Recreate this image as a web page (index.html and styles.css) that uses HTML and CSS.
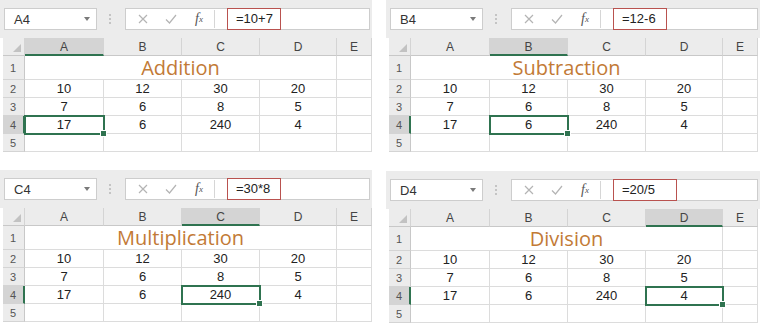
FILE: index.html
```html
<!DOCTYPE html>
<html lang="en">
<head>
    <meta charset="UTF-8">
    <meta name="viewport" content="width=device-width, initial-scale=1.0">
    <title>Excel Arithmetic Formulas</title>
    <link rel="stylesheet" href="styles.css">
</head>
<body>

    <div class="sheet">

        <!-- Addition -->
        <div class="panel">
            <div class="toolbar">
                <div class="namebox"><span>A4</span><span class="caret"></span></div>
                <div class="grip"></div>
                <div class="fbar">
                    <span class="ic"><svg width="10" height="10" viewBox="0 0 10 10"><path d="M1 1L9 9M9 1L1 9" stroke="#b4b4b4" stroke-width="1.2"/></svg></span>
                    <span class="ic"><svg width="12" height="10" viewBox="0 0 12 10"><path d="M1 5.5L4.5 9L11 1" stroke="#b4b4b4" stroke-width="1.2" fill="none"/></svg></span>
                    <span class="ic fx">f<sub>x</sub></span>
                    <span class="fsep"></span>
                    <span class="formula">=10+7</span>
                </div>
            </div>
            <div class="grid">
                <div class="corner"></div>
                <div class="ch on">A</div><div class="ch">B</div><div class="ch">C</div><div class="ch">D</div><div class="ch">E</div>
                <div class="rh">1</div><div class="title">Addition</div><div class="c"></div>
                <div class="rh">2</div><div class="c">10</div><div class="c">12</div><div class="c">30</div><div class="c">20</div><div class="c"></div>
                <div class="rh">3</div><div class="c">7</div><div class="c">6</div><div class="c">8</div><div class="c">5</div><div class="c"></div>
                <div class="rh on">4</div><div class="c sel">17</div><div class="c">6</div><div class="c">240</div><div class="c">4</div><div class="c"></div>
                <div class="rh">5</div><div class="c"></div><div class="c"></div><div class="c"></div><div class="c"></div><div class="c"></div>
            </div>
        </div>

        <!-- Subtraction -->
        <div class="panel">
            <div class="toolbar">
                <div class="namebox"><span>B4</span><span class="caret"></span></div>
                <div class="grip"></div>
                <div class="fbar">
                    <span class="ic"><svg width="10" height="10" viewBox="0 0 10 10"><path d="M1 1L9 9M9 1L1 9" stroke="#b4b4b4" stroke-width="1.2"/></svg></span>
                    <span class="ic"><svg width="12" height="10" viewBox="0 0 12 10"><path d="M1 5.5L4.5 9L11 1" stroke="#b4b4b4" stroke-width="1.2" fill="none"/></svg></span>
                    <span class="ic fx">f<sub>x</sub></span>
                    <span class="fsep"></span>
                    <span class="formula">=12-6</span>
                </div>
            </div>
            <div class="grid">
                <div class="corner"></div>
                <div class="ch">A</div><div class="ch on">B</div><div class="ch">C</div><div class="ch">D</div><div class="ch">E</div>
                <div class="rh">1</div><div class="title">Subtraction</div><div class="c"></div>
                <div class="rh">2</div><div class="c">10</div><div class="c">12</div><div class="c">30</div><div class="c">20</div><div class="c"></div>
                <div class="rh">3</div><div class="c">7</div><div class="c">6</div><div class="c">8</div><div class="c">5</div><div class="c"></div>
                <div class="rh on">4</div><div class="c">17</div><div class="c sel">6</div><div class="c">240</div><div class="c">4</div><div class="c"></div>
                <div class="rh">5</div><div class="c"></div><div class="c"></div><div class="c"></div><div class="c"></div><div class="c"></div>
            </div>
        </div>

        <!-- Multiplication -->
        <div class="panel">
            <div class="toolbar">
                <div class="namebox"><span>C4</span><span class="caret"></span></div>
                <div class="grip"></div>
                <div class="fbar">
                    <span class="ic"><svg width="10" height="10" viewBox="0 0 10 10"><path d="M1 1L9 9M9 1L1 9" stroke="#b4b4b4" stroke-width="1.2"/></svg></span>
                    <span class="ic"><svg width="12" height="10" viewBox="0 0 12 10"><path d="M1 5.5L4.5 9L11 1" stroke="#b4b4b4" stroke-width="1.2" fill="none"/></svg></span>
                    <span class="ic fx">f<sub>x</sub></span>
                    <span class="fsep"></span>
                    <span class="formula">=30*8</span>
                </div>
            </div>
            <div class="grid">
                <div class="corner"></div>
                <div class="ch">A</div><div class="ch">B</div><div class="ch on">C</div><div class="ch">D</div><div class="ch">E</div>
                <div class="rh">1</div><div class="title">Multiplication</div><div class="c"></div>
                <div class="rh">2</div><div class="c">10</div><div class="c">12</div><div class="c">30</div><div class="c">20</div><div class="c"></div>
                <div class="rh">3</div><div class="c">7</div><div class="c">6</div><div class="c">8</div><div class="c">5</div><div class="c"></div>
                <div class="rh on">4</div><div class="c">17</div><div class="c">6</div><div class="c sel">240</div><div class="c">4</div><div class="c"></div>
                <div class="rh">5</div><div class="c"></div><div class="c"></div><div class="c"></div><div class="c"></div><div class="c"></div>
            </div>
        </div>

        <!-- Division -->
        <div class="panel shifted">
            <div class="toolbar">
                <div class="namebox"><span>D4</span><span class="caret"></span></div>
                <div class="grip"></div>
                <div class="fbar">
                    <span class="ic"><svg width="10" height="10" viewBox="0 0 10 10"><path d="M1 1L9 9M9 1L1 9" stroke="#b4b4b4" stroke-width="1.2"/></svg></span>
                    <span class="ic"><svg width="12" height="10" viewBox="0 0 12 10"><path d="M1 5.5L4.5 9L11 1" stroke="#b4b4b4" stroke-width="1.2" fill="none"/></svg></span>
                    <span class="ic fx">f<sub>x</sub></span>
                    <span class="fsep"></span>
                    <span class="formula wide">=20/5</span>
                </div>
            </div>
            <div class="grid">
                <div class="corner"></div>
                <div class="ch">A</div><div class="ch">B</div><div class="ch">C</div><div class="ch on">D</div><div class="ch">E</div>
                <div class="rh">1</div><div class="title">Division</div><div class="c"></div>
                <div class="rh">2</div><div class="c">10</div><div class="c">12</div><div class="c">30</div><div class="c">20</div><div class="c"></div>
                <div class="rh">3</div><div class="c">7</div><div class="c">6</div><div class="c">8</div><div class="c">5</div><div class="c"></div>
                <div class="rh on">4</div><div class="c">17</div><div class="c">6</div><div class="c">240</div><div class="c sel">4</div><div class="c"></div>
                <div class="rh">5</div><div class="c"></div><div class="c"></div><div class="c"></div><div class="c"></div><div class="c"></div>
            </div>
        </div>

    </div>

</body>
</html>
```

FILE: styles.css
```css
body {
    margin: 0;
    background-color: #fff;
    font-family: "Liberation Sans", Arial, sans-serif;
    color: #222;
}
.sheet {
    display: grid;
    grid-template-columns: 372px 374px;
    column-gap: 14px;
    row-gap: 18px;
}
.panel {
    width: 100%;
}
.shifted {
    margin-top: 1px;
}

/* name box + formula bar */
.toolbar {
    height: 38px;
    box-sizing: border-box;
    padding: 8px 2px 0 4px;
    background-color: #ececec;
    display: flex;
    align-items: flex-start;
}
.namebox {
    width: 93px;
    height: 22px;
    box-sizing: border-box;
    border: 1px solid #cdcdcd;
    background-color: #fff;
    display: flex;
    align-items: center;
    justify-content: space-between;
    padding: 0 6px 0 9px;
    font-size: 13px;
    color: #333;
}
.caret {
    width: 0;
    height: 0;
    border-left: 3px solid transparent;
    border-right: 3px solid transparent;
    border-top: 4px solid #7a7a7a;
}
.grip {
    width: 2px;
    height: 10px;
    margin: 6px 12px 0 12px;
    border-left: 2px dotted #c4c4c4;
}
.fbar {
    flex: 1;
    height: 22px;
    box-sizing: border-box;
    border: 1px solid #cdcdcd;
    background-color: #fff;
    display: flex;
    align-items: center;
    padding-left: 3px;
}
.ic {
    width: 28px;
    display: flex;
    justify-content: center;
    align-items: center;
}
.fx {
    font-family: "Liberation Serif", "Times New Roman", serif;
    font-style: italic;
    font-size: 14px;
    color: #555;
}
.fx sub {
    font-size: 9px;
}
.fsep {
    width: 1px;
    height: 18px;
    margin-left: 1px;
    background-color: #d6d6d6;
}
.formula {
    align-self: stretch;
    margin: -1px 0 -1px 12px;
    width: 54px;
    box-sizing: border-box;
    border: 1px solid #b9524f;
    padding-left: 8px;
    font-size: 13px;
    line-height: 20px;
    color: #222;
}
.formula.wide {
    width: 64px;
}

/* worksheet grid */
.grid {
    margin-left: 3px;
    display: grid;
    grid-template-columns: 22px 79px 78px 78px 77px 35px;
    grid-template-rows: 18px 24px 18px 18px 18px 18px;
}
.corner {
    background-color: #ececec;
    border-right: 1px solid #d4d4d4;
    border-bottom: 1px solid #c8c8c8;
    position: relative;
}
.corner::after {
    content: "";
    position: absolute;
    right: 3px;
    bottom: 3px;
    border-left: 8px solid transparent;
    border-bottom: 8px solid #c2c2c2;
}
.ch {
    background-color: #ececec;
    border-right: 1px solid #d4d4d4;
    border-bottom: 1px solid #c8c8c8;
    font-size: 12px;
    color: #444;
    text-align: center;
    line-height: 18px;
}
.ch.on {
    background-color: #d4d4d4;
    border-bottom: 2px solid #2f7350;
}
.rh {
    background-color: #ececec;
    border-right: 1px solid #c8c8c8;
    border-bottom: 1px solid #d4d4d4;
    font-size: 11px;
    color: #555;
    display: flex;
    align-items: center;
    padding-left: 7px;
}
.rh.on {
    background-color: #d4d4d4;
    border-right: 2px solid #2f7350;
}
.c {
    border-right: 1px solid #dcdcdc;
    border-bottom: 1px solid #dcdcdc;
    font-size: 13px;
    text-align: center;
    line-height: 18px;
}
.title {
    grid-column: span 4;
    border-right: 1px solid #dcdcdc;
    border-bottom: 1px solid #dcdcdc;
    font-family: "Open Sans", "Liberation Sans", sans-serif;
    font-size: 20px;
    color: #c27a36;
    text-align: center;
    line-height: 24px;
}
.sel {
    position: relative;
    outline: 2px solid #2f7350;
    outline-offset: -1px;
    z-index: 1;
}
.sel::after {
    content: "";
    position: absolute;
    right: -4px;
    bottom: -4px;
    width: 5px;
    height: 5px;
    background-color: #2f7350;
    border: 1px solid #fff;
}
```
